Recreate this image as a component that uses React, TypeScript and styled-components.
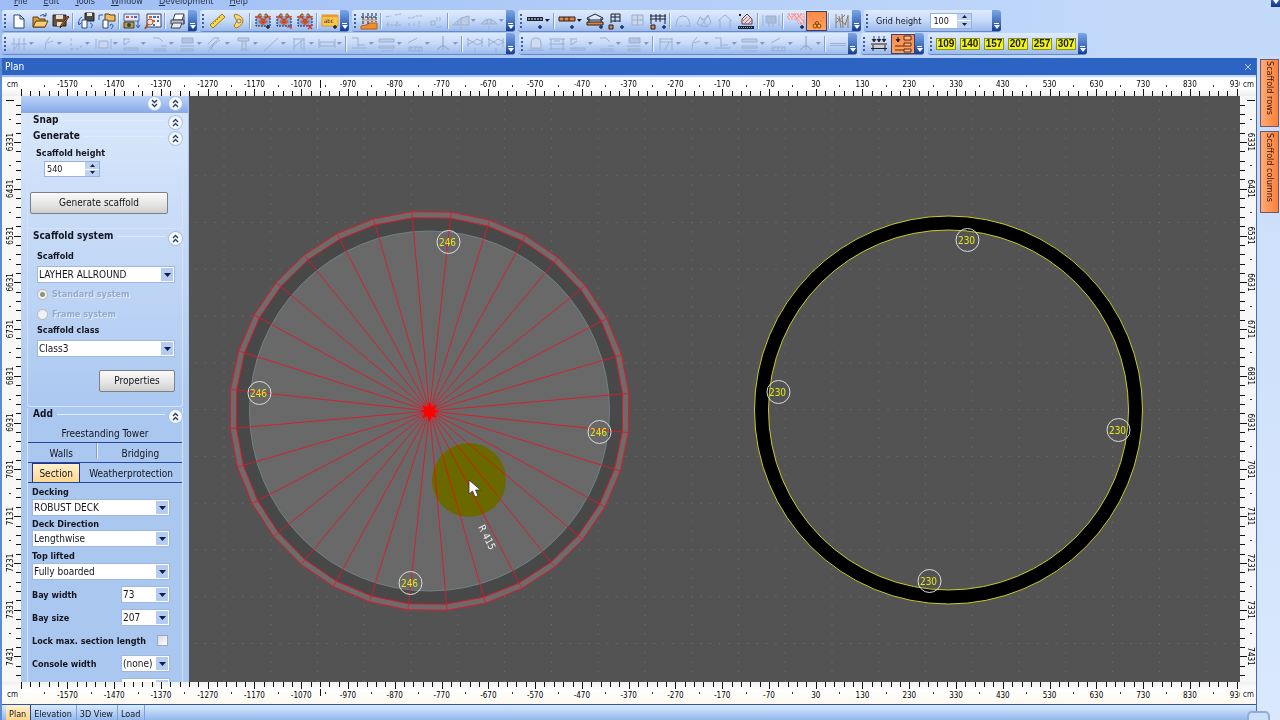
import React, { useEffect, useRef, useState } from "react";
import styled, { createGlobalStyle, css } from "styled-components";

const UI_FONT = '"DejaVu Sans Condensed", "DejaVu Sans", sans-serif';

const GlobalStyle = createGlobalStyle`
  * { box-sizing: border-box; }
  body { margin: 0; background: #b4cdf6; }
  button, input, select { font: inherit; color: inherit; margin: 0; padding: 0; border: 0; }
`;

/* ---------- frame ---------- */

const Shell = styled.div`
  position: relative;
  display: flex;
  flex-direction: column;
  height: 100vh;
  overflow: hidden;
  font-family: ${UI_FONT};
  font-size: 9px;
  line-height: 12px;
  color: #14141e;
  background: linear-gradient(90deg, #9ebdf4, #c2d9fa 88%);
`;

const MenuBar = styled.nav`
  display: flex;
  align-items: flex-end;
  gap: 16px;
  height: 10px;
  padding: 0 0 3px 14px;
  overflow: hidden;
  flex: none;
`;

const MenuItem = styled.a`
  color: #23304c;
  text-decoration: none;
`;

const MenuEnd = styled.span`
  margin-left: auto;
`;

const ToolRow = styled.div<{ $gap: number }>`
  display: flex;
  gap: ${(p) => p.$gap}px;
  height: 22px;
  padding-left: 2px;
  margin-bottom: 1px;
  flex: none;
`;

const Strip = styled.div`
  display: flex;
  align-items: center;
  flex: none;
  border-radius: 3px;
  overflow: hidden;
  background: linear-gradient(#dfebfd, #c6daf9 50%, #9bbaeb);
  border-bottom: 1px solid #6488c9;
`;

const Grip = styled.span`
  width: 2px;
  height: 14px;
  margin: 0 2px;
  background: repeating-linear-gradient(#3d5f9f 0 2px, transparent 2px 4px);
`;

const Divider = styled.span`
  width: 1px;
  height: 16px;
  margin: 0 2px 0 1px;
  background: #7f9fd3;
  box-shadow: 1px 0 #eef5ff;
`;

const CapBox = styled.button`
  display: flex;
  align-items: flex-end;
  justify-content: center;
  width: 9px;
  height: 22px;
  padding-bottom: 2px;
  background: linear-gradient(#7da6e6, #3d6cbc 60%, #12348a);
`;

const ToolButton = styled.button<{ $wide?: boolean; $active?: boolean; $span?: number }>`
  display: flex;
  align-items: center;
  justify-content: center;
  width: ${(p) => p.$span ?? (p.$wide ? 28 : 21)}px;
  height: 20px;
  background: none;
  ${(p) =>
    p.$active &&
    css`
      background: linear-gradient(#fb8a49, #ffa55e);
      box-shadow: inset 0 0 0 1px #3a3f76;
    `}
`;

const SizeTag = styled.button`
  width: 20px;
  height: 12px;
  margin: 0 2px;
  border: 1px solid #8c9420;
  background: #f2f21c;
  font: bold 10px/10px "Liberation Sans", Arial, sans-serif;
  color: #22220a;
`;

const GridField = styled.label`
  display: flex;
  align-items: center;
  gap: 9px;
  padding: 0 20px 0 6px;
`;

const Spin = styled.span<{ $width: number }>`
  display: flex;
  width: ${(p) => p.$width}px;
  height: 16px;
  background: #fff;
  border: 1px solid #98b2dc;

  input {
    flex: 1;
    min-width: 0;
    padding-left: 2px;
    background: none;
    outline: none;
  }
`;

const SpinButtons = styled.span`
  display: grid;
  grid-template-rows: 1fr 1fr;
  gap: 1px;
  width: 14px;

  button {
    display: flex;
    align-items: center;
    justify-content: center;
    background: #bdd2f5;
  }
`;

/* ---------- workspace ---------- */

const Workspace = styled.div`
  display: flex;
  flex: 1;
  min-height: 0;
`;

const Frame = styled.main`
  display: flex;
  flex-direction: column;
  flex: 1;
  min-width: 0;
  border-left: 2px solid #5f8ad4;
  border-right: 1px solid #3f6cb8;
  margin-top: 2px;
`;

const TitleBar = styled.header`
  display: flex;
  align-items: center;
  justify-content: space-between;
  height: 17px;
  padding: 0 4px 0 3px;
  margin-bottom: 2px;
  background: #2d64c3;
  color: #fff;
  font-size: 10px;
  flex: none;

  button {
    display: flex;
    background: none;
  }
`;

const RulerRow = styled.div<{ $bottom?: boolean }>`
  display: grid;
  grid-template-columns: 19px minmax(0, 1fr) 16px;
  height: ${(p) => (p.$bottom ? 22 : 19)}px;
  flex: none;
  background: ${(p) =>
    p.$bottom ? "linear-gradient(#f1f1ef, #fff 40%, #fdf8ee)" : "linear-gradient(#f2f6ff, #fff 20%, #fff 60%, #ededed)"};
`;

const Unit = styled.span<{ $align: "right" | "left"; $bottom?: boolean }>`
  font-size: 8px;
  text-align: ${(p) => p.$align};
  padding: ${(p) => (p.$bottom ? 7 : 2)}px 3px 0 3px;
`;

const RulerSvg = styled.svg`
  display: block;
  width: 100%;
  height: 100%;
  min-width: 0;
  overflow: hidden;
  font-family: ${UI_FONT};
  font-size: 8px;
`;

const Middle = styled.div`
  display: grid;
  grid-template-columns: 19px 168px minmax(0, 1fr) 16px;
  grid-template-rows: minmax(0, 1fr);
  flex: 1;
  min-height: 0;
  background: #f7f7f7;
`;

const Drawing = styled.svg`
  display: block;
  width: 100%;
  height: 100%;
  background: #535353;
`;

const ViewTabs = styled.nav`
  display: flex;
  align-items: stretch;
  height: 16px;
  padding-left: 4px;
  border-top: 1px solid #2b57a8;
  background: linear-gradient(#dcebfd, #92b8ee);
  flex: none;
`;

const ViewTab = styled.button<{ $active?: boolean }>`
  padding: 2px 4px 0 3px;
  background: ${(p) => (p.$active ? "linear-gradient(#fff0cf, #ffd68a)" : "none")};
  border-right: 1px solid ${(p) => (p.$active ? "#27418a" : "#7fa0d6")};
`;

const SideTabs = styled.aside`
  display: flex;
  flex-direction: column;
  gap: 4px;
  width: 23px;
  padding: 3px 1px 0 3px;
  background: linear-gradient(#c9dcfa, #d9e8fd);
`;

const SideTab = styled.button<{ $length: number }>`
  writing-mode: vertical-rl;
  height: ${(p) => p.$length}px;
  padding-top: 1px;
  text-align: left;
  color: #2c1610;
  background: linear-gradient(90deg, #ffab77, #ff8038);
  border: 1px solid #6f5670;
`;

const CornerButton = styled.button`
  position: absolute;
  right: 10px;
  bottom: -8px;
  width: 23px;
  height: 17px;
  border: 2px solid #8fabd6;
  border-radius: 5px;
  background: #cbdffa;
`;

/* ---------- settings panel ---------- */

const Panel = styled.section`
  display: flex;
  flex-direction: column;
  overflow: hidden;
  background: linear-gradient(#dbe9fc, #aac7f0 55%);
  border-right: 1px solid #a9c6f3;
`;

const PanelTop = styled.div`
  display: flex;
  justify-content: flex-end;
  gap: 8px;
  height: 17px;
  padding: 1px 6px 0 0;
  background: linear-gradient(#bcd3f7, #85aae6);
  flex: none;
`;

const RoundButton = styled.button`
  display: flex;
  align-items: center;
  justify-content: center;
  width: 13px;
  height: 13px;
  border-radius: 50%;
  background: #f4f8ff;
  box-shadow: 0 0 0 1px #a9c0e6;
  flex: none;
`;

const Group = styled.div<{ $height?: number }>`
  display: flex;
  flex-direction: column;
  flex: none;
  margin: 1px 5px 0 6px;
  ${(p) => p.$height && `height: ${p.$height}px;`}
  border: 1px solid #d3e3fb;
  border-top: 0;
  border-radius: 0 0 3px 3px;
`;

const GroupHead = styled.div`
  display: flex;
  align-items: flex-start;
  height: 15px;
  padding-left: 5px;
  gap: 4px;
  flex: none;

  h2 {
    margin: 0;
    font-size: 10px;
    line-height: 12px;
  }

  i {
    flex: 1;
    height: 1px;
    margin-top: 6px;
    background: #e0ebfd;
  }

  button {
    margin-top: 2px;
  }
`;

const Stack = styled.div<{ $indent: number; $top: number }>`
  display: flex;
  flex-direction: column;
  align-items: flex-start;
  padding: ${(p) => p.$top}px 0 0 ${(p) => p.$indent}px;
`;

const FieldLabel = styled.label`
  font-weight: bold;
  line-height: 12px;
`;

const PickBox = styled.span<{ $width: number }>`
  position: relative;
  display: flex;
  width: ${(p) => p.$width}px;
  height: 17px;
  background: #fff;
  border: 1px solid #9fb8e0;
  font-size: 10px;
  flex: none;

  select {
    appearance: none;
    flex: 1;
    min-width: 0;
    padding: 0 12px 0 1px;
    background: none;
    outline: none;
  }

  svg {
    position: absolute;
    top: 1px;
    right: 1px;
    pointer-events: none;
  }
`;

const PushButton = styled.button<{ $width: number }>`
  width: ${(p) => p.$width}px;
  height: 22px;
  font-size: 10px;
  background: linear-gradient(#fafafa, #e8e8e6 50%, #cfcfcd);
  border: 1px solid #7b7f88;
  border-radius: 2px;
`;

const RadioRow = styled.label`
  display: flex;
  align-items: center;
  gap: 4px;
  height: 20px;
  font-weight: bold;
  color: #93a9cd;
  text-shadow: 1px 1px #e3eefd;

  input {
    appearance: none;
    width: 11px;
    height: 11px;
    border: 1px solid #b9b9ae;
    border-radius: 50%;
    background: #eef2f8;
  }
  input:checked {
    background: radial-gradient(#8f9088 0 2px, #eef0ea 3px);
  }
`;

const TabLine = styled.div`
  display: flex;
  height: 20px;
  font-size: 10px;
  border-bottom: 1px solid #2547a0;
`;

const PanelTab = styled.button<{ $grow: number; $active?: boolean }>`
  flex: ${(p) => p.$grow} 1 0;
  white-space: nowrap;
  background: none;
  padding-top: 3px;
  ${(p) =>
    p.$active &&
    css`
      background: linear-gradient(#fff0cd, #ffd88f);
      border: 1px solid #27348a;
      border-bottom: 0;
      margin-left: 4px;
      padding-top: 1px;
    `}
`;

const InlineField = styled.div`
  display: flex;
  align-items: center;
  justify-content: space-between;
  width: 138px;
  height: 23px;
`;

const Tick = styled.input`
  && {
    appearance: none;
    width: 11px;
    height: 11px;
    margin-right: 2px;
    border: 1px solid #9aa9c0;
    background: linear-gradient(135deg, #d4d9e0, #fff);
  }
`;

const FieldGap = styled.div<{ $size: number }>`
  height: ${(p) => p.$size}px;
  flex: none;
`;

/* ---------- icons ---------- */

const K = "#1b2233";
const G = "#9aafd2";
const O = "#f08030";

const picnic = (
  <>
    <path d="M2 4h14v10H2z" fill="#7fb2f3" />
    <path d="M2 4v10h14V4" stroke={K} strokeDasharray="2 1" />
    <path d="M2 6l3-2 4 5 4-5 3 2M5 9l4 3 4-3" stroke="#e2532c" strokeWidth="2.2" />
    <path d="M5 2h2v3H5zM11 2h2v3h-2zM8 8h2v2H8z" fill="#f3c54d" stroke="#5a2b14" strokeWidth=".7" />
  </>
);

const plus = (x: number, y: number, c = "#14306c") => (
  <path d={`M${x - 2} ${y}h4M${x} ${y - 2}v4`} stroke={c} strokeWidth="1.4" />
);

const icons: Record<string, React.ReactNode> = {
  page: <path d="M4 3h6l4 4v9H4zM10 3v4h4" fill="#fff" stroke="#2d4777" />,
  open: (
    <>
      <path d="M2 5h5l1 2h6v8H2z" fill="#d99a3d" stroke="#5b3d14" />
      <path d="M5 9h12l-3 6H2z" fill="#f6cd74" stroke="#5b3d14" />
      <path d="M9 4q3-3 6 0m0-3v3h-3" stroke="#2c4f9c" />
    </>
  ),
  saveEdit: (
    <>
      <path d="M1 3h13v11H1z" fill="#6a5136" stroke={K} />
      <path d="M4 3h7v4H4zM5 10h6v4H5z" fill="#e7ddc8" />
      <path d="M17 5l-7 9-2 2 1-3 7-9z" fill="#ee7c2e" stroke="#50260f" />
    </>
  ),
  importFile: (
    <>
      <path d="M8 1h9v8H8z" fill="#4d4a48" stroke={K} />
      <path d="M10 1h5v3h-5z" fill="#f1e6cf" />
      <path d="M5 8h5v8H5z" fill="#fff" stroke="#2d4777" />
      <path d="M5 5q-4 2-3 7m-1-2l1 3 2-2M13 11q4 1 1 5" stroke="#2c5bb8" />
    </>
  ),
  exportFile: (
    <>
      <path d="M7 2h4l1 1h5v6H7z" fill="#efbb5c" stroke="#5b3d14" />
      <path d="M5 8h5v8H5z" fill="#fff" stroke="#2d4777" />
      <path d="M5 3H1v5m12 4q4 1 0 5m0-5l-1 2" stroke="#2c5bb8" />
    </>
  ),
  gallery: (
    <>
      <path d="M1 2h15v7H1z" fill="#dbe7fa" stroke="#51688f" />
      <path d="M3 4h3v2H3zM8 4h2v2H8z" fill="#dd5638" />
      <path d="M11 4h3v2h-3z" fill="#3c6cc4" />
      <path d="M1 10h10v6H1z" fill="#b59a5d" stroke="#4c3e20" />
      <circle cx="6" cy="13" r="2" fill="#2d4a2c" />
      <path d="M15 9v6m-2-2l2 3 2-3" stroke="#2c5bb8" />
    </>
  ),
  calendar: (
    <>
      <path d="M3 2h14v13H3z" fill="#f4f6fc" stroke="#31456f" />
      <path d="M5 4h3v2H5zM9 8h2v2H9z" fill="#dd5638" />
      <path d="M9 4h3v2H9zM13 4h2v2h-2zM13 8h2v2h-2zM9 12h2v2H9z" fill="#3c6cc4" />
      <circle cx="6" cy="10" r="3" fill="#f4ddc2" stroke="#b0532c" />
      <path d="M4 12l-3 5" stroke="#b0532c" strokeWidth="2" />
    </>
  ),
  print: (
    <>
      <path d="M6 2h9l-2 6H4z" fill="#fff" stroke="#39435a" />
      <path d="M2 8h13v4H2z" fill="#bfc2c6" stroke="#39435a" />
      <path d="M4 11h9l-2 5H2z" fill="#ececec" stroke="#39435a" />
      <path d="M15 3v9" stroke="#3b567f" />
    </>
  ),
  ruler: <path d="M14 2l3 3L5 16l-3-3zM11 5l1 1M9 7l1 1M7 9l1 1M5 11l1 1" fill="#f6da4e" stroke="#a5791a" />,
  protractor: (
    <>
      <path d="M6 2q8 2 8 7-1 5-7 7l-2-2 3-5-3-5z" fill="#f6da7c" stroke="#a5791a" />
      <circle cx="10" cy="9" r="2" fill="#cfe0fb" stroke="#a5791a" />
    </>
  ),
  picAdd: (
    <>
      {picnic}
      {plus(14, 15, K)}
    </>
  ),
  picMove: (
    <>
      {picnic}
      <path d="M12 15h5m-1-2v4" stroke="#c22c2c" />
    </>
  ),
  picRemove: (
    <>
      {picnic}
      <path d="M12 13l4 4m0-4l-4 4" stroke="#d33333" strokeWidth="1.5" />
    </>
  ),
  note: (
    <>
      <path d="M1 3h16v11H1z" fill="#fbc64a" stroke="#e09a2d" />
      <path d="M1 3h16v2H1z" fill="#f0952c" />
      <text x="3" y="11" fontSize="6" fill={K}>
        abc
      </text>
      {plus(14, 15, K)}
    </>
  ),
  terrain: (
    <>
      <path d="M1 17v-3l5-1 4-2h7v6z" fill="#f0902c" stroke="#b55d12" />
      <path d="M3 1v12M8 1v11M12 1v9M16 1v9M1 5h16" stroke={K} strokeDasharray="3 1" />
      <path d="M2 8h14" stroke={O} />
    </>
  ),
  dimLine: <path d="M1 5l5-1M10 3l6-1M3 10v5M12 9v6M1 13h15" stroke={G} strokeDasharray="3 1" />,
  dimAngle: <path d="M2 6h4l4-2h6M3 11v4M8 11v4M13 9v6" stroke={G} strokeDasharray="3 1" />,
  degree: <path d="M4 9h4v4H4zM10 5v4M13 5v4M9 15h6" stroke={G} />,
  roof: <path d="M1 13L9 6l8-2v9zM6 9v4M9 7v6M9 15v2" fill="#bdcce5" stroke={G} />,
  roofLow: <path d="M1 12q8-10 16 0zM7 8v4M11 8v4M9 14v3" fill="#bdcce5" stroke={G} />,
  deckDark: (
    <>
      <path d="M1 5h16v4H1z" fill={K} />
      <path d="M2 7h14" stroke="#fff" strokeDasharray="2 1" />
      {plus(14, 15)}
    </>
  ),
  deckOrange: (
    <>
      <path d="M1 5h16v4H1zM6 5v4M11 5v4" fill={O} stroke={K} />
      {plus(14, 15)}
    </>
  ),
  house: (
    <>
      <path d="M1 6l8-4 8 4-1 2H2zM3 6v4M15 6v4" fill="#dfe9f8" stroke={K} />
      <path d="M1 10h16v3H1z" fill={O} stroke={K} />
      {plus(15, 15)}
    </>
  ),
  tower: (
    <>
      <path d="M4 2h9v8M4 2v9M4 5h9M8 2v8M4 9h9" stroke={K} />
      <path d="M2 13h4v4H2z" fill={O} stroke={K} />
      {plus(15, 15)}
    </>
  ),
  grid: <path d="M4 3h11v10H4zM9.500 3v10M4 8h11" fill="#cbd7ea" stroke={G} />,
  rail: (
    <>
      <path d="M1 4h16M2 2v10M7 2v8M11 2v8M16 2v10M1 7h16" stroke={K} />
      <path d="M2 13h4v4H2z" fill={O} stroke={K} />
      {plus(15, 15)}
    </>
  ),
  arch: <path d="M2 15q0-11 7-11t7 11M5 14h3M12 14h3" stroke={G} />,
  cluster: <path d="M2 12l3-7 4 3 4-5 3 7-4 5-5-1zM5 5l7 9M13 4L6 14" stroke={G} />,
  home: <path d="M2 9l7-6 7 6M4 8v8M14 8v8" stroke={G} />,
  crane: (
    <>
      <path d="M5 7l5-5 5 5v5H5z" fill="#ebd8dc" stroke="#5b4352" />
      <path d="M6 9l4-4M7 12l6-6M11 12l4-4" stroke="#a66a74" />
      <path d="M1 14h16v3H1z" fill={K} />
      <path d="M2 15.500h14" stroke="#8fa4cc" strokeDasharray="1 1" />
      <path d="M2 2h2v2H2z" fill={K} />
    </>
  ),
  screen: <path d="M1 3v11M17 3v11M4 4h10v7H4zM7 11v4M11 11v4" fill="#aebdd8" stroke={G} />,
  hatch: (
    <>
      <path d="M1 2h16v9l-5 1-3-5H1z" fill="#f9d1d6" stroke="#e58f9c" strokeDasharray="2 1" />
      <path d="M2 3l3 3M6 2l8 9M10 2l7 8M4 6l5-4M9 7l6-5" stroke="#e58f9c" />
      {plus(15, 15, K)}
    </>
  ),
  nodes: (
    <>
      <path d="M2 3l6 9M16 5l-6 7" stroke="#ff6b3a" strokeDasharray="2 2" />
      <circle cx="7" cy="14" r="2" fill="#ffb13c" stroke="#8a3c10" />
      <circle cx="11" cy="14" r="2" fill="#ffb13c" stroke="#8a3c10" />
      <circle cx="9" cy="11" r="1.500" fill="#ffb13c" stroke="#8a3c10" />
    </>
  ),
  waves: <path d="M3 2v14M6 4l2 12M9 2l1 14M15 3v13M12 13l3-9M4 6l9 7M3 11l9-8" stroke="#8a7a68" />,
  arrows: (
    <>
      <path d="M4 1v5M9 1v5M14 1v5M2 4l2 3 2-3M7 4l2 3 2-3M12 4l2 3 2-3" stroke={K} strokeWidth=".8" fill={K} />
      <path d="M1 10.500h16" stroke="#f7c7a6" strokeWidth="2" />
      <path d="M1 13.500h16M3 10v6M15 10v6M1 9h16" stroke={K} />
    </>
  ),
  layers: (
    <>
      <path d="M4 2v5M2 4l2 3 2-3" stroke={K} fill={K} />
      <path d="M10 1h7v4h-7zM10 8h7v3h-7zM10 14h7v3h-7z" fill="#f9b98c" stroke="#5b2b12" />
      <path d="M1 11h9M1 15h9" stroke="#5b2b12" />
    </>
  ),
  g1: <path d="M4 3v12M9 3v12M14 3v12M1 9h16M4 15l5-7" stroke={G} />,
  g2: <path d="M12 2L8 7l-1 8M9 8l6-2" stroke={G} />,
  g3: <path d="M5 3v12M5 14h10M15 10v5" stroke={G} strokeDasharray="3 2" />,
  g4: <path d="M2 4v10M5 6h9v7H5zM17 4v10" fill="#c8d6ee" stroke={G} />,
  g5: <path d="M2 3v7M2 4h6M2 10l6-4M2 13h14v2H2z" stroke={G} />,
  g6: <path d="M3 3h6l4 4M4 14h12v2H4zM11 11h6" stroke={G} />,
  g7: <path d="M4 3h11v5H4zM2 11h14M3 14h12v2H3z" fill="#b3c4e1" stroke={G} />,
  g8: <path d="M2 9L8 3h5L6 10v5M3 13l11-8M2 16l6-6" stroke={G} />,
  g9: <path d="M4 3h11v3H4zM8 6v8h4V6M6 15h9" fill="#bfcee8" stroke={G} />,
  g10: <path d="M2 16L16 3" stroke={G} />,
  g11: <path d="M4 3v12M14 3v13M4 4h10M4 12l9-7M11 5v9" stroke={G} />,
  g12: <path d="M1 4v9M17 4v9M2 7h14v4H2z" fill="#c8d6ee" stroke={G} />,
  g13: <path d="M2 3h6v9M2 13h15M8 10h7" stroke={G} />,
  g14: <path d="M1 4h15v3H1zM1 11h15v2H1zM3 16h12" fill="#bfcee8" stroke={G} />,
  g15: <path d="M2 8l9-5M3 12h13v4H3zM6 12l-2 4M10 12l-2 4M14 12l-2 4" stroke={G} />,
  g16: <path d="M9 1v14M9 10l-6 5M9 10l6 5" stroke={G} strokeWidth="1.300" />,
  g17: <path d="M1 4l6 3 4-3 6 3M1 10l6-3 4 3 6-3M2 3v9M16 3v9M9 13v4" stroke={G} />,
  g18: <path d="M4 13V8q0-5 5-5t5 5v5zM1 15h16" fill="#cddaef" stroke={G} />,
  g19: <path d="M1 4h16M3 4v11M15 4v11M1 9h16M1 14h16M6 6h6" stroke={G} />,
  g20: <path d="M3 15V3M15 15V3M3 4h12M3 7h12M12 7l-4 8" stroke={G} />,
  g21: <path d="M1 8.500h16M1 10.500h16" stroke={G} />,
};

function Icon({ name }: { name: string }) {
  return (
    <svg width="18" height="18" viewBox="0 0 18 18" fill="none" aria-hidden="true">
      {icons[name]}
    </svg>
  );
}

function Caret({ muted }: { muted?: boolean }) {
  return (
    <svg width="6" height="4" viewBox="0 0 6 4" aria-hidden="true">
      <path d="M1 0h5L3 3z" fill={muted ? "#8299c2" : K} />
    </svg>
  );
}

function Chevrons({ down }: { down?: boolean }) {
  return (
    <svg width="9" height="9" viewBox="0 0 9 9" fill="none" stroke="#27396b" strokeWidth="1.3" aria-hidden="true">
      <path d={down ? "M2 1l2.500 2.500L7 1M2 5l2.500 2.500L7 5" : "M2 4l2.500-2.500L7 4M2 8l2.500-2.500L7 8"} />
    </svg>
  );
}

function Cap() {
  return (
    <CapBox aria-label="Toolbar options">
      <svg width="7" height="8" viewBox="0 0 7 8" aria-hidden="true">
        <path d="M1 1.500h5" stroke="#fff" />
        <path d="M1 3h6L4 7z" fill="#fff" />
      </svg>
    </CapBox>
  );
}

/* A trailing ">" marks a tool with a drop-down, "|" is a divider, a leading "*" is switched on. */
function ToolStrip({ tools, span }: { tools: string; span?: number }) {
  return (
    <Strip role="toolbar">
      <Grip />
      {tools.split(" ").map((token, i) => {
        if (token === "|") return <Divider key={i} />;
        const wide = token.endsWith(">");
        const active = token.startsWith("*");
        const name = token.replace(/[*>]/g, "");
        return (
          <ToolButton key={i} $wide={wide} $active={active} $span={span} aria-label={name}>
            <Icon name={name} />
            {wide && <Caret muted={!name.startsWith("deck")} />}
          </ToolButton>
        );
      })}
      <Cap />
    </Strip>
  );
}

function SpinBox({ id, value, width }: { id: string; value: string; width: number }) {
  return (
    <Spin $width={width}>
      <input id={id} defaultValue={value} />
      <SpinButtons>
        <button aria-label="Increase">
          <svg width="5" height="3" viewBox="0 0 5 3" aria-hidden="true">
            <path d="M0 3h5L2.500 0z" fill={K} />
          </svg>
        </button>
        <button aria-label="Decrease">
          <svg width="5" height="3" viewBox="0 0 5 3" aria-hidden="true">
            <path d="M0 0h5L2.500 3z" fill={K} />
          </svg>
        </button>
      </SpinButtons>
    </Spin>
  );
}

function Pick({ id, value, width, label }: { id: string; value: string; width: number; label?: string }) {
  return (
    <PickBox $width={width}>
      <select id={id} aria-label={label} defaultValue={value}>
        <option>{value}</option>
      </select>
      <svg width="12" height="13" viewBox="0 0 12 13" aria-hidden="true">
        <path d="M0 0h12v13H0z" fill="#b4cbf3" />
        <path d="M3 5h7L6.500 9z" fill="#101c46" />
      </svg>
    </PickBox>
  );
}

/* ---------- rulers ---------- */

const STEP = 46.77;

/* Length of the ruler along its axis, so that only the marks that fit are drawn. */
function useLength(axis: "width" | "height") {
  const ref = useRef<SVGSVGElement>(null);
  const [length, setLength] = useState(0);
  useEffect(() => {
    const node = ref.current;
    if (!node) return;
    const measure = () => setLength(node.getBoundingClientRect()[axis]);
    measure();
    const observer = new ResizeObserver(measure);
    observer.observe(node);
    return () => observer.disconnect();
  }, [axis]);
  return { ref, length };
}

function marks(first: number, length: number) {
  const small: { at: number; major: boolean }[] = [];
  for (let i = -5; first + (i * STEP) / 5 < length; i++) {
    small.push({ at: Math.round(first + (i * STEP) / 5), major: i % 5 === 0 });
  }
  const labels: number[] = [];
  for (let i = 0; first + i * STEP < length; i++) labels.push(i);
  return { small, labels };
}

function HorizontalRuler({ bottom }: { bottom?: boolean }) {
  const first = 46.4;
  const { ref, length } = useLength("width");
  const { small, labels } = marks(first, length);
  const base = bottom ? 0 : 19;
  const dir = bottom ? 1 : -1;
  return (
    <RulerSvg ref={ref}>
      {small.map((t) => (
        <path key={t.at} d={`M${t.at}.5 ${base}v${dir * (t.major ? 7 : 5)}`} stroke="#111" />
      ))}
      {labels.map((i) => (
        <g key={i}>
          <text x={first + i * STEP} y={bottom ? 16 : 10} textAnchor="middle">
            {-1570 + i * 100}
          </text>
          <path d={`M${Math.round(first + (i - 0.5) * STEP)}.5 ${bottom ? 10 : 8}v2`} stroke="#333" />
        </g>
      ))}
      <path d={bottom ? "M299.500 7v7" : "M299.500 3v8"} stroke="#111" />
    </RulerSvg>
  );
}

function VerticalRuler({ right }: { right?: boolean }) {
  const first = 46;
  const { ref, length } = useLength("height");
  const { small, labels } = marks(first, length);
  const edge = right ? 0 : 19;
  const dir = right ? 1 : -1;
  const mid = right ? 8 : 11;
  return (
    <RulerSvg ref={ref}>
      {small.map((t) => (
        <path key={t.at} d={`M${edge} ${t.at}.5h${dir * (t.major ? 7 : 5)}`} stroke="#111" />
      ))}
      {labels.map((i) => (
        <g key={i}>
          <text transform={`translate(${mid} ${first + i * STEP}) rotate(${right ? 90 : -90})`} textAnchor="middle">
            {6331 + i * 100}
          </text>
          <path d={`M${right ? 10 : 7} ${Math.round(first + (i - 0.5) * STEP)}.5h2`} stroke="#333" />
        </g>
      ))}
      <path d={right ? "M7 4.500h8" : "M4 4.500h8"} stroke="#111" />
    </RulerSvg>
  );
}

/* ---------- plan drawing ---------- */

const SIDES = 32;

function vertices(radius: number) {
  return Array.from({ length: SIDES }, (_, i) => {
    const a = ((6.2 + (i * 360) / SIDES) * Math.PI) / 180;
    return [radius * Math.cos(a), radius * Math.sin(a)].map((n) => n.toFixed(1)).join(",");
  });
}

function Marker({ x, y, value }: { x: number; y: number; value: number }) {
  return (
    <g transform={`translate(${x} ${y})`}>
      <circle r="11.500" fill="none" stroke="#dcdcdc" />
      <text x="-1" y="4" textAnchor="middle" fontSize="10" fill="#e6e619">
        {value}
      </text>
    </g>
  );
}

function PlanDrawing() {
  return (
    <Drawing fontFamily='"DejaVu Sans Condensed", "DejaVu Sans", sans-serif' role="img" aria-label="Plan view">
      <defs>
        <pattern id="dots" x="34.500" y="32.500" width={STEP} height={STEP} patternUnits="userSpaceOnUse">
          {[0, 1, 2, 3, 4].map((i) => (
            <g key={i} fill="#787878">
              <rect x={i * 9.35} width="1" height="1" />
              <rect y={i * 9.35} width="1" height="1" />
            </g>
          ))}
        </pattern>
      </defs>
      <rect width="100%" height="100%" fill="url(#dots)" />

      <g transform="translate(240.500 315)">
        <polygon points={vertices(200).join(" ")} fill="#6c6c6c" />
        <polygon points={vertices(194).join(" ")} fill="#484848" />
        <circle r="180" fill="#696969" stroke="#6f8288" />
        <g fill="none" stroke="#e0192b">
          <polygon points={vertices(200).join(" ")} />
          <polygon points={vertices(194).join(" ")} />
          {vertices(200).map((v) => (
            <path key={v} d={`M0 0L${v}`} strokeWidth=".9" />
          ))}
        </g>
        <path d="M0-9l2 5 5-2-2 5 5 1-5 2 2 5-5-2-2 6-2-6-5 2 2-5-5-2 5-1-2-5 5 2z" fill="#ff0000" />
        <circle cx="39.500" cy="69" r="37" fill="#ffff00" style={{ mixBlendMode: "multiply" }} />
        <text transform="translate(58 126) rotate(63)" y="4" textAnchor="middle" fontSize="10" fill="#f0f0f0">
          R 415
        </text>
        <path d="M39.500 69v14l3.500-3 2.500 6 3-1.500-2.500-5.500h5z" fill="#fff" stroke="#333" strokeWidth=".8" />
        <Marker x={19} y={-169} value={246} />
        <Marker x={-170} y={-18} value={246} />
        <Marker x={170} y={21} value={246} />
        <Marker x={-19} y={172} value={246} />
      </g>

      <g transform="translate(759.500 314)">
        <circle r="187" fill="none" stroke="#000" strokeWidth="14" />
        <circle r="194" fill="none" stroke="#c6cc26" />
        <circle r="180" fill="none" stroke="#c6cc26" />
        <Marker x={19} y={-170} value={230} />
        <Marker x={-170} y={-18} value={230} />
        <Marker x={170} y={20} value={230} />
        <Marker x={-19} y={171} value={230} />
      </g>
    </Drawing>
  );
}

/* ---------- panel content ---------- */

function GroupTitle({ children }: { children: React.ReactNode }) {
  return (
    <GroupHead>
      <h2>{children}</h2>
      <i />
      <RoundButton aria-label="Collapse group">
        <Chevrons />
      </RoundButton>
    </GroupHead>
  );
}

function SettingsPanel() {
  return (
    <Panel>
      <PanelTop>
        <RoundButton aria-label="Expand all">
          <Chevrons down />
        </RoundButton>
        <RoundButton aria-label="Collapse all">
          <Chevrons />
        </RoundButton>
      </PanelTop>

      <Group $height={15}>
        <GroupTitle>Snap</GroupTitle>
      </Group>

      <Group $height={99}>
        <GroupTitle>Generate</GroupTitle>
        <Stack $indent={8} $top={2}>
          <FieldLabel htmlFor="height">Scaffold height</FieldLabel>
        </Stack>
        <Stack $indent={16} $top={2}>
          <SpinBox id="height" value="540" width={56} />
        </Stack>
        <Stack $indent={2} $top={15}>
          <PushButton $width={138}>Generate scaffold</PushButton>
        </Stack>
      </Group>

      <Group $height={177}>
        <GroupTitle>Scaffold system</GroupTitle>
        <Stack $indent={9} $top={5}>
          <FieldLabel htmlFor="scaffold">Scaffold</FieldLabel>
          <FieldGap $size={4} />
          <Pick id="scaffold" value="LAYHER ALLROUND" width={138} />
          <FieldGap $size={1} />
          <RadioRow>
            <input type="radio" name="system" defaultChecked disabled />
            Standard system
          </RadioRow>
          <RadioRow>
            <input type="radio" name="system" disabled />
            Frame system
          </RadioRow>
          <FieldLabel htmlFor="class">Scaffold class</FieldLabel>
          <FieldGap $size={4} />
          <Pick id="class" value="Class3" width={138} />
        </Stack>
        <Stack $indent={71} $top={13}>
          <PushButton $width={76}>Properties</PushButton>
        </Stack>
      </Group>

      <Group>
        <GroupTitle>Add</GroupTitle>
        <TabLine>
          <PanelTab $grow={1}>Freestanding Tower</PanelTab>
        </TabLine>
        <TabLine>
          <PanelTab $grow={4}>Walls</PanelTab>
          <Divider />
          <PanelTab $grow={5}>Bridging</PanelTab>
        </TabLine>
        <TabLine>
          <PanelTab $grow={5} $active>
            Section
          </PanelTab>
          <PanelTab $grow={11}>Weatherprotection</PanelTab>
        </TabLine>
        <Stack $indent={4} $top={3}>
          <FieldLabel htmlFor="decking">Decking</FieldLabel>
          <FieldGap $size={1} />
          <Pick id="decking" value="ROBUST DECK" width={138} />
          <FieldGap $size={2} />
          <FieldLabel htmlFor="direction">Deck Direction</FieldLabel>
          <Pick id="direction" value="Lengthwise" width={138} />
          <FieldGap $size={3} />
          <FieldLabel htmlFor="lifted">Top lifted</FieldLabel>
          <FieldGap $size={1} />
          <Pick id="lifted" value="Fully boarded" width={138} />
          <FieldGap $size={3} />
          <InlineField>
            <FieldLabel htmlFor="bay-width">Bay width</FieldLabel>
            <Pick id="bay-width" value="73" width={49} />
          </InlineField>
          <InlineField>
            <FieldLabel htmlFor="bay-size">Bay size</FieldLabel>
            <Pick id="bay-size" value="207" width={49} />
          </InlineField>
          <InlineField>
            <FieldLabel htmlFor="lock">Lock max. section length</FieldLabel>
            <Tick id="lock" type="checkbox" />
          </InlineField>
          <InlineField>
            <FieldLabel htmlFor="console">Console width</FieldLabel>
            <Pick id="console" value="(none)" width={49} />
          </InlineField>
          <InlineField>
            <span />
            <Pick id="console-side" value="" width={49} label="Console side" />
          </InlineField>
        </Stack>
      </Group>
    </Panel>
  );
}

/* ---------- page ---------- */

const menu = ["File", "Edit", "Tools", "Window", "Development", "Help"];
const sizes = [109, 140, 157, 207, 257, 307];

export default function App() {
  return (
    <Shell>
      <GlobalStyle />
      <MenuBar>
        {menu.map((m) => (
          <MenuItem key={m} href="#">
            <u>{m[0]}</u>
            {m.slice(1)}
          </MenuItem>
        ))}
        <MenuEnd>
          <Cap />
        </MenuEnd>
      </MenuBar>

      <ToolRow $gap={3}>
        <ToolStrip tools="page open saveEdit | importFile exportFile | gallery calendar | print" />
        <ToolStrip tools="ruler protractor | picAdd picMove picRemove | note" />
        <ToolStrip tools="terrain | dimLine dimAngle degree | roof> roofLow>" />
        <ToolStrip tools="deckDark> | deckOrange> house tower grid rail | arch cluster home crane | screen | hatch *nodes | waves" />
        <Strip>
          <Grip />
          <GridField htmlFor="grid-height">
            Grid height
            <SpinBox id="grid-height" value="100" width={42} />
          </GridField>
          <Cap />
        </Strip>
      </ToolRow>
      <ToolRow $gap={4}>
        <ToolStrip tools="g1> g2> g3> g4> g5> g6> g7> g8> g9> g10> g11> g12> | g13> g14> g15> g16> | g17 g17" />
        <ToolStrip tools="g18 g19 g5> g6> g7> | g20> g2> g13> g14> g15> g16> | g21" />
        <ToolStrip tools="arrows *layers" span={24} />
        <Strip>
          <Grip />
          {sizes.map((s) => (
            <SizeTag key={s}>{s}</SizeTag>
          ))}
          <Cap />
        </Strip>
      </ToolRow>

      <Workspace>
        <Frame>
          <TitleBar>
            Plan
            <button aria-label="Close">
              <svg width="8" height="8" viewBox="0 0 8 8" stroke="#b9d0f5" aria-hidden="true">
                <path d="M1 1l6 6M7 1L1 7" />
              </svg>
            </button>
          </TitleBar>
          <RulerRow>
            <Unit $align="right">cm</Unit>
            <HorizontalRuler />
            <Unit $align="left">cm</Unit>
          </RulerRow>
          <Middle>
            <VerticalRuler />
            <SettingsPanel />
            <PlanDrawing />
            <VerticalRuler right />
          </Middle>
          <RulerRow $bottom>
            <Unit $align="right" $bottom>
              cm
            </Unit>
            <HorizontalRuler bottom />
            <Unit $align="left" $bottom>
              cm
            </Unit>
          </RulerRow>
          <ViewTabs>
            <ViewTab $active>Plan</ViewTab>
            <ViewTab>Elevation</ViewTab>
            <ViewTab>3D View</ViewTab>
            <ViewTab>Load</ViewTab>
          </ViewTabs>
        </Frame>
        <SideTabs>
          <SideTab $length={68}>Scaffold rows</SideTab>
          <SideTab $length={82}>Scaffold columns</SideTab>
        </SideTabs>
      </Workspace>
      <CornerButton aria-label="Resize" />
    </Shell>
  );
}
